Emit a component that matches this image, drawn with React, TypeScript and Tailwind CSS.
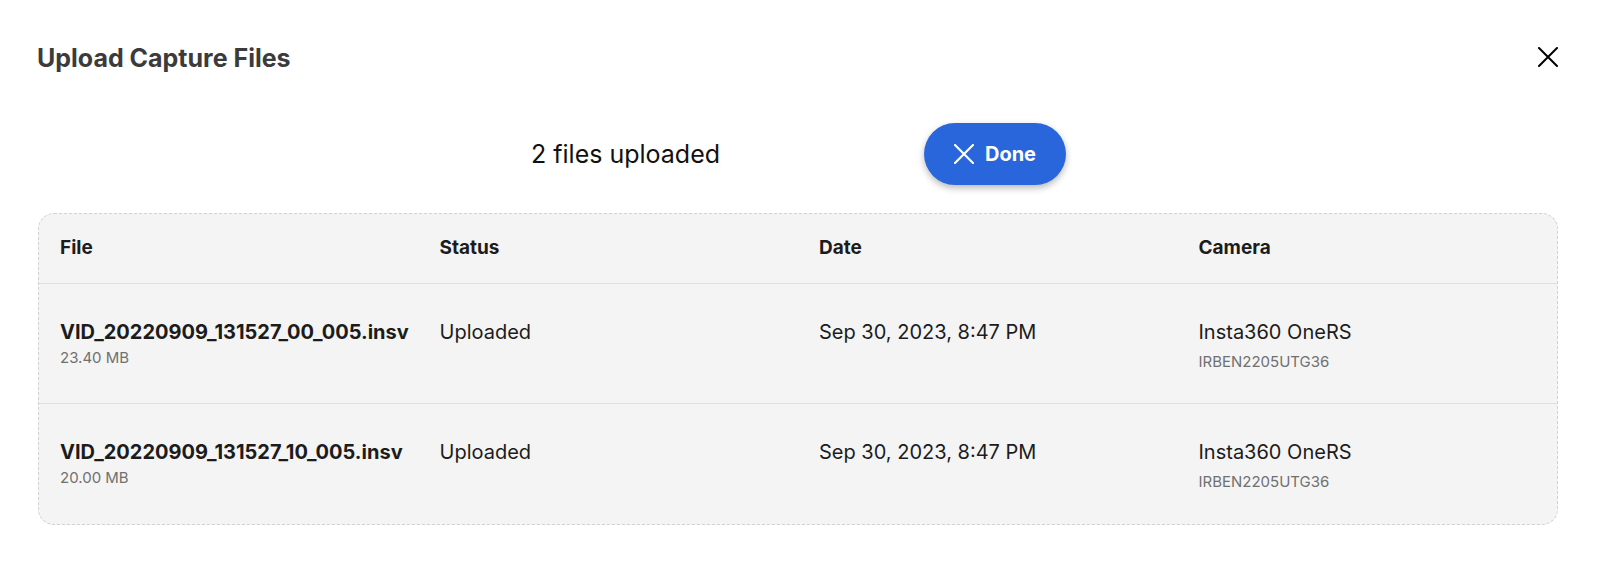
const FILES = [
  {
    name: "VID_20220909_131527_00_005.insv",
    size: "23.40 MB",
    status: "Uploaded",
    date: "Sep 30, 2023, 8:47 PM",
    camera: "Insta360 OneRS",
    serial: "IRBEN2205UTG36",
  },
  {
    name: "VID_20220909_131527_10_005.insv",
    size: "20.00 MB",
    status: "Uploaded",
    date: "Sep 30, 2023, 8:47 PM",
    camera: "Insta360 OneRS",
    serial: "IRBEN2205UTG36",
  },
];

const COLS = ["File", "Status", "Date", "Camera"];

function Cross({ size, stroke }: { size: number; stroke: number }) {
  return (
    <svg width={size} height={size} viewBox="0 0 20 20" fill="none">
      <path d="M1 1L19 19M19 1L1 19" stroke="currentColor" strokeWidth={stroke} strokeLinecap="round" />
    </svg>
  );
}

export default function App() {
  return (
    <div
      className="h-[562px] w-[1600px] bg-white text-[#1c1c1c]"
      style={{ fontFamily: "Inter, 'Noto Sans', sans-serif" }}
    >
      <header className="flex items-center justify-between pl-[37px] pr-[42px] pt-[43px]">
        <h1 className="text-[25px] font-bold leading-[30px] text-[#3b3b3b]">
          Upload Capture Files
        </h1>
        <button className="-mt-[3px] text-black">
          <Cross size={20} stroke={2} />
        </button>
      </header>

      {/* upload summary */}
      <div className="mt-[50px] flex items-center pl-[531px]">
        <p className="w-[393px] text-[25px] leading-[32px] text-[#111]">2 files uploaded</p>
        <button className="flex h-[62px] w-[142px] items-center justify-center gap-[11px] rounded-full bg-[#2965db] text-[20px] font-bold text-white shadow-[0_3px_7px_rgba(0,0,0,0.28)]">
          <Cross size={20} stroke={2.2} />
          Done
        </button>
      </div>

      <div className="ml-[38px] mr-[42px] mt-[28px] overflow-hidden rounded-2xl border border-dashed border-[#d2d2d2] bg-[#f4f4f4]">
        <div className="grid h-[70px] grid-cols-4 items-center border-b border-[#e0e0e0]">
          {COLS.map((c) => (
            <div key={c} className="pl-[21px] text-[19px] font-bold text-[#1c1c1c]">
              {c}
            </div>
          ))}
        </div>
        {FILES.map((f, i) => (
          <div
            key={f.name}
            className={
              "grid h-[120px] grid-cols-4 items-start pt-[34px]" +
              (i < FILES.length - 1 ? " border-b border-[#e0e0e0]" : "")
            }
          >
            <div className="pl-[21px]">
              <div className="text-[20px] font-bold leading-[28px] text-[#1c1c1c]">{f.name}</div>
              <div className="mt-[2px] text-[15px] leading-[20px] text-[#707070]">{f.size}</div>
            </div>
            <div className="pl-[21px] text-[20px] leading-[28px]">{f.status}</div>
            <div className="pl-[21px] text-[20px] leading-[28px]">{f.date}</div>
            <div className="pl-[21px]">
              <div className="text-[20px] leading-[28px]">{f.camera}</div>
              <div className="mt-[6px] text-[15px] leading-[20px] text-[#707070]">{f.serial}</div>
            </div>
          </div>
        ))}
      </div>
    </div>
  );
}
